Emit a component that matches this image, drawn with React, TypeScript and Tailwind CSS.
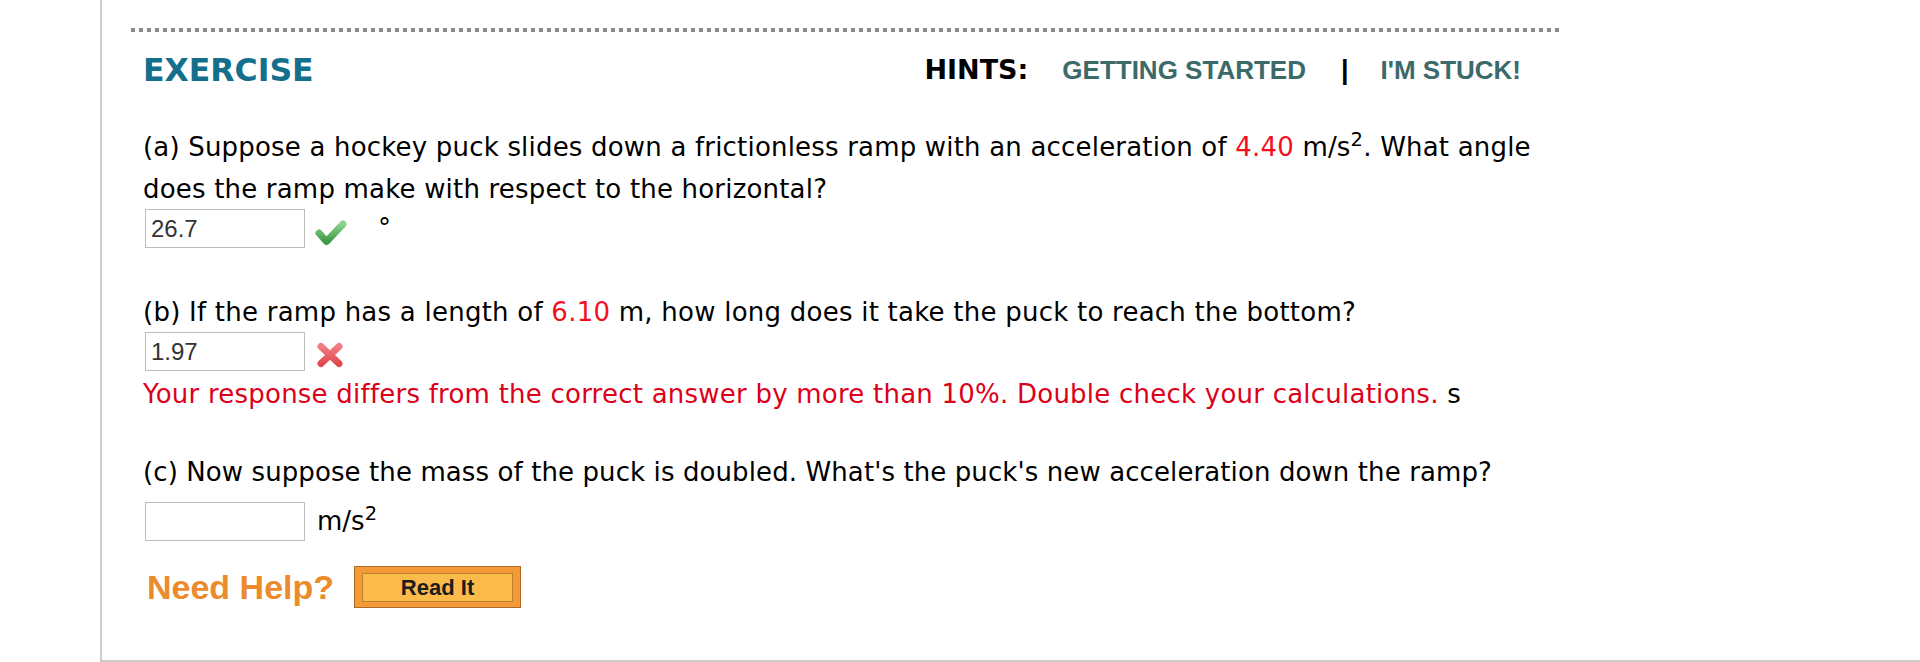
import React from "react";

const body = "font-['DejaVu_Sans',Verdana,sans-serif]";
const arial = "font-['Liberation_Sans',Arial,Helvetica,sans-serif]";

function Check() {
  return (
    <svg width="32" height="26" viewBox="0 0 32 26" className="block">
      <defs>
        <linearGradient id="gchk" x1="0" y1="0" x2="0" y2="1">
          <stop offset="0" stopColor="#8fd38f" />
          <stop offset="1" stopColor="#3f9a45" />
        </linearGradient>
      </defs>
      <path
        d="M4 13 L11.5 21.5 L28 4"
        fill="none"
        stroke="url(#gchk)"
        strokeWidth="7"
        strokeLinecap="round"
        strokeLinejoin="round"
      />
    </svg>
  );
}

function Cross() {
  return (
    <svg width="28" height="26" viewBox="0 0 28 26" className="block">
      <defs>
        <linearGradient id="gx" x1="0" y1="0" x2="0" y2="1">
          <stop offset="0" stopColor="#f07d80" />
          <stop offset="1" stopColor="#e04a4f" />
        </linearGradient>
      </defs>
      <path
        d="M5 4.5 L23 21.5 M23 4.5 L5 21.5"
        fill="none"
        stroke="url(#gx)"
        strokeWidth="7"
        strokeLinecap="round"
      />
    </svg>
  );
}

function Input({ value }: { value?: string }) {
  return (
    <div
      className={`w-[160px] h-[39px] border border-[#bdbdbd] bg-white pl-[5px] text-[24px] leading-[37px] text-[#333] ${arial}`}
    >
      {value}
    </div>
  );
}

export default function App() {
  return (
    <div className="w-[1920px] h-[662px] bg-white overflow-hidden">
      <div className="ml-[100px] h-[662px] border-l-2 border-b-2 border-[#cccccc] pl-[29px] pt-[28px]">
        <div className="w-[1430px] h-[4px] bg-[linear-gradient(to_right,#8a8a8a_50%,transparent_50%)] bg-[length:8px_4px] bg-repeat-x" />
        <div className="pl-[12px] text-black">
          <div className="mt-[18px] h-[40px] w-[1378px] flex items-start justify-between">
            <span className={`${body} font-bold text-[31.5px] leading-[40px] text-[#136f8c]`}>EXERCISE</span>
            <div className="flex items-baseline">
              <span className={`${body} font-bold text-[27px] leading-[40px] text-black`}>HINTS:</span>
              <span className={`${arial} font-bold text-[26px] leading-[40px] text-[#3b6a6a] ml-[34px]`}>
                GETTING STARTED
              </span>
              <span className={`${arial} font-bold text-[27px] leading-[40px] text-black ml-[35px]`}>|</span>
              <span className={`${arial} font-bold text-[26px] leading-[40px] text-[#3b6a6a] ml-[32px]`}>
                I'M STUCK!
              </span>
            </div>
          </div>

          <div className={`${body} text-[26px] leading-[42px] mt-[36px] whitespace-nowrap tracking-[0.19px]`}>
            (a) Suppose a hockey puck slides down a frictionless ramp with an acceleration of{" "}
            <span className="text-[#f2101e]">4.40</span> m/s<sup>2</sup>. What angle
            <br />
            does the ramp make with respect to the horizontal?
          </div>
          <div className="flex items-start h-[40px] ml-[2px] -mt-[1px]">
            <Input value="26.7" />
            <div className="ml-[10px] mt-[11px]">
              <Check />
            </div>
            <span className={`${body} text-[26px] leading-[39px] ml-[31px]`}>°</span>
          </div>

          <div className={`${body} text-[26px] leading-[42px] mt-[42px] whitespace-nowrap tracking-[0.24px]`}>
            (b) If the ramp has a length of <span className="text-[#f2101e]">6.10</span> m, how long does it take
            the puck to reach the bottom?
          </div>
          <div className="flex items-start h-[39px] ml-[2px] -mt-[1px]">
            <Input value="1.97" />
            <div className="ml-[11px] mt-[10px]">
              <Cross />
            </div>
          </div>
          <div className={`${body} text-[26px] leading-[42px] mt-[2px] whitespace-nowrap tracking-[0.23px]`}>
            <span className="text-[#dc0019]">
              Your response differs from the correct answer by more than 10%. Double check your calculations.
            </span>{" "}
            s
          </div>

          <div className={`${body} text-[26px] leading-[42px] mt-[36px] whitespace-nowrap tracking-[0.1px]`}>
            (c) Now suppose the mass of the puck is doubled. What's the puck's new acceleration down the ramp?
          </div>
          <div className="flex items-start h-[39px] ml-[2px] mt-[9px]">
            <Input />
            <span className={`${body} text-[26px] leading-[39px] ml-[12px]`}>
              m/s<sup>2</sup>
            </span>
          </div>

          <div className="flex items-center mt-[25px] h-[42px]">
            <span className={`${arial} font-bold text-[34px] leading-[42px] text-[#ec8b2c] ml-[4px]`}>
              Need Help?
            </span>
            <div className="ml-[20px] w-[167px] h-[42px] border border-[#b06a28] bg-[#f39a36] px-[7px] pt-[6px] pb-[5px]">
              <div
                className={`h-full border border-[#b9802f] bg-[#fbbb4b] flex items-center justify-center ${arial} font-bold text-[22px] text-[#1c1c1c]`}
              >
                Read It
              </div>
            </div>
          </div>
        </div>
      </div>
    </div>
  );
}
